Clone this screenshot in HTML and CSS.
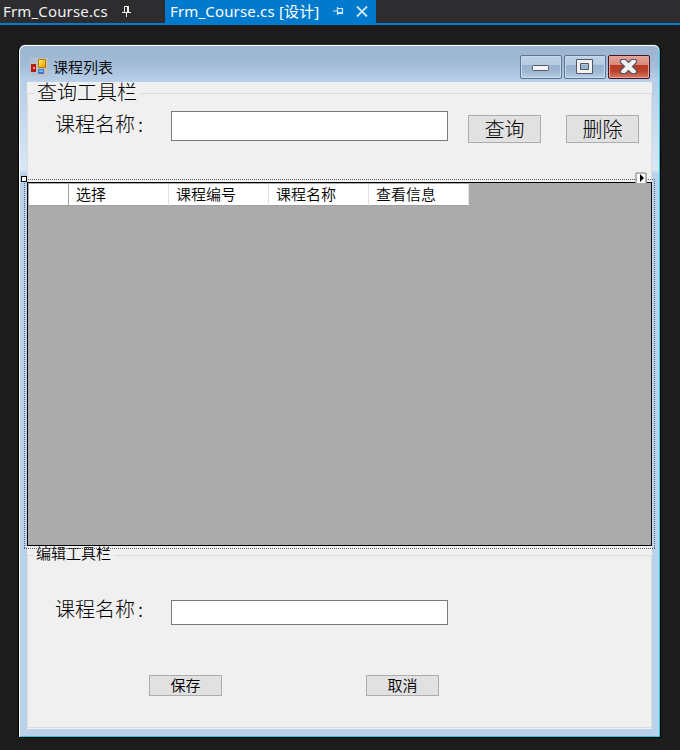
FILE: index.html
```html
<!DOCTYPE html>
<html lang="zh-CN">
<head>
  <meta charset="UTF-8" />
  <title>Frm_Course.cs [设计]</title>
  <link rel="stylesheet" href="styles.css">
</head>
<body>
  <!-- Editor tabs -->
  <div class="tabs">
    <div class="tab">
      <span class="tab-name">Frm_Course.cs</span>
      <svg class="pin" width="9" height="11" viewBox="0 0 9 11"><path d="M2.5 6V.5h4V6M0 6.5h9M4.5 7v4" fill="none" stroke="#f1f1f1"/><path d="M5 0h2v6H5z" fill="#f1f1f1"/></svg>
    </div>
    <div class="tab active">
      <span class="tab-name tab-name-design">Frm_Course.cs [设计]</span>
      <svg class="pin-side" width="11" height="9" viewBox="0 0 11 9"><path d="M4.500 1.500h5v5h-5M4.500 0v8M0 4h4" fill="none" stroke="#d0e6f5" stroke-width="1.200"/><path d="M5 5h5v2H5z" fill="#d0e6f5"/></svg>
      <svg class="tab-close" width="12" height="11" viewBox="0 0 12 11"><path d="M1 .5l10 10M11 .5l-10 10" fill="none" stroke="#d0e6f5" stroke-width="1.800"/></svg>
    </div>
  </div>

  <!-- Form in the designer -->
  <div class="window">
    <div class="titlebar">
      <svg class="app-icon" width="18" height="18" viewBox="0 0 18 18">
        <defs>
          <linearGradient id="gold" x2="1" y2="1"><stop offset="0" stop-color="#fff0a0"/><stop offset=".5" stop-color="#f8c820"/><stop offset="1" stop-color="#d89800"/></linearGradient>
        </defs>
        <path d="M0 0h18v18H0z" fill="#bfc1c2"/>
        <path d="M1 1h5v4H1zM1 13h5v4H1z" fill="#a9bfd8"/>
        <path d="M1 6h5v8H1z" fill="#b81c10"/><path d="M3 9h2v2H3z" fill="#ff9a80"/>
        <path d="M8.500 1.500h7v8h-7z" fill="url(#gold)" stroke="#b07800"/>
        <path d="M8 11h6v5H8z" fill="#3a78d8"/><path d="M9 12h4v2H9z" fill="#80b0f8"/>
      </svg>
      <span class="caption">课程列表</span>
      <div class="sysbuttons">
        <div class="sysbtn"><svg width="40" height="22" viewBox="0 0 40 22"><rect x="11.500" y="9.500" width="16" height="5" rx="1" fill="#f4f4f4" stroke="#535666"/></svg></div>
        <div class="sysbtn"><svg width="40" height="22" viewBox="0 0 40 22"><path fill-rule="evenodd" d="M11.500 3.500h16v14h-16zM15.500 7.500v6h8v-6z" fill="#f2f2f2" stroke="#535666"/></svg></div>
        <div class="sysbtn close"><svg width="40" height="22" viewBox="0 0 40 22"><path d="M12.500 3.500h4l3 3 3-3h4l1 1v2l-4 4 4 4v2l-1 1h-4l-3-3-3 3h-4l-1-1v-2l4-4-4-4v-2z" fill="#f2f2f2" stroke="#535666" stroke-width="1.200"/></svg></div>
      </div>
    </div>

    <div class="client">
      <fieldset class="group query">
        <legend>查询工具栏</legend>
        <div class="row">
          <label class="label" for="queryName">课程名称<span class="colon">:</span></label>
          <input class="textbox tall" id="queryName" type="text">
          <button class="btn big">查询</button>
          <button class="btn big">删除</button>
        </div>
      </fieldset>

      <div class="gridview">
        <div class="columns">
          <div class="col rowhead"></div>
          <div class="col">选择</div>
          <div class="col">课程编号</div>
          <div class="col">课程名称</div>
          <div class="col">查看信息</div>
        </div>
        <!-- designer selection marks -->
        <div class="selection"></div>
        <div class="handle"></div>
        <svg class="smart-tag" width="12" height="11" viewBox="0 0 12 11"><path d="M1 11V1.500L2 1h8l1 .5V11" fill="#fff" stroke="#a3a39b" stroke-width="1.600"/><path d="M5 2v8l4-4z"/></svg>
      </div>

      <fieldset class="group edit">
        <legend>编辑工具栏</legend>
        <div class="row">
          <label class="label" for="editName">课程名称<span class="colon">:</span></label>
          <input class="textbox" id="editName" type="text">
        </div>
        <div class="actions">
          <button class="btn">保存</button>
          <button class="btn">取消</button>
        </div>
      </fieldset>
    </div>
  </div>
</body>
</html>
```
FILE: styles.css
```css
*, *::before, *::after { box-sizing: border-box; }

body {
  margin: 0;
  height: 750px;
  overflow: hidden;
  background: #1c1c1c;
  color: #000;
  font: 350 15px "Noto Sans CJK SC", sans-serif;
}

svg { display: block; flex: none; }

/* Editor tabs */
.tabs {
  display: flex;
  height: 25px;
  background: #2d2d30;
  border-bottom: 2px solid #007acc;
}
.tab {
  display: flex;
  width: 165px;
  padding-left: 3px;
  color: #f1f1f1;
  font: 15px/23px "Noto Sans", "Noto Sans CJK SC", sans-serif;
  letter-spacing: 0.16px;
  white-space: nowrap;
}
.tab.active {
  width: 211px;
  padding-left: 5px;
  background: #007acc;
  color: #fff;
}
.tab-name { width: 105px; }
.tab-name-design { width: 149px; }
.pin { margin: 6px 0 0 14px; }
.pin-side { margin: 7px 0 0 14px; }
.tab-close { margin: 6px 0 0 12px; }

/* Form frame */
.window {
  width: 643px;
  height: 694px;
  margin: 19px 0 0 18px;
  padding: 0 7px 7px;
  border: 1px solid #000;
  border-top-color: #303030;
  border-radius: 7px 7px 0 0;
  background: linear-gradient(#b7cee8 37px, #d9e7f6 125px, #b9d1ea 128px);
  box-shadow: inset 1px 1px #fff, inset -1px -1px #28c8e0;
}
.titlebar {
  display: flex;
  height: 37px;
  margin: 0 -6px;
  padding: 0 9px 0 10px;
  border-top: 1px solid #fff;
  border-radius: 6px 6px 0 0;
  background: linear-gradient(#99b4d1, #a2bbd6 50%, #b9d1ea);
}
.app-icon { margin-top: 12px; }
.caption {
  margin: 11px auto 0 5px;
  line-height: 20px;
}
.sysbuttons { display: flex; gap: 2px; margin-top: 9px; }
.sysbtn {
  width: 42px;
  height: 24px;
  border: 1px solid #5f7390;
  border-radius: 2px;
  background: linear-gradient(#bfd2e6, #b4cae1 42%, #98b1cd 43%, #9db7d2 70%, #b9d1e8);
  box-shadow: inset 0 0 0 1px #c8dbee;
}
.sysbtn.close {
  border-color: #431422;
  background: linear-gradient(#e4a39a, #d98678 42%, #b83a24 43%, #bc432d 70%, #d77b68);
  box-shadow: inset 0 0 0 1px #e3a79f;
}

/* Client area */
.client {
  display: flex;
  flex-direction: column;
  width: 625px;
  height: 647px;
  margin-left: 1px;
  background: #f0f0f0;
}
.group {
  min-width: 0;
  margin: 0;
  padding: 0;
  border: 1px solid #dcdcdc;
}
.group legend {
  margin-left: 6px;
  padding: 0 3px;
}
.query { height: 100px; border-bottom: none; }
.query legend {
  font-size: 20px;
  font-weight: 300;
  line-height: 20px;
  padding-bottom: 3px;
}
.edit { height: 182px; }
.edit legend {
  margin-left: 5px;
  line-height: 14px;
  padding-bottom: 5px;
}
.row {
  display: flex;
  align-items: flex-start;
  padding-left: 27px;
}
.query .row { padding-top: 6px; }
.edit .row { padding-top: 35px; }
.label {
  width: 116px;
  font-size: 20px;
  font-weight: 300;
  line-height: 26px;
}
.edit .label { margin-top: -4px; }
.colon { margin-left: 3px; }
.textbox {
  width: 277px;
  height: 25px;
  padding: 0 4px;
  border: 1px solid #7a7a7a;
  background: #fff;
  font: inherit;
}
.textbox.tall { height: 30px; }
.btn {
  width: 73px;
  height: 21px;
  padding: 0 0 2px;
  border: 1px solid #adadad;
  background: #e1e1e1;
  color: #000;
  font: 350 15px/17px "Noto Sans CJK SC", sans-serif;
}
.btn.big {
  height: 28px;
  margin: 4px 0 0 20px;
  padding: 0;
  font-size: 20px;
  font-weight: 300;
  line-height: 26px;
}
.btn.big + .btn.big { margin-left: 25px; }
.actions {
  display: flex;
  gap: 144px;
  padding: 50px 0 0 121px;
}

/* Course grid */
.gridview {
  position: relative;
  height: 364px;
  padding: 1px;
  border: 1px solid #000;
  background: #ababab;
}
.columns { display: flex; }
.col {
  width: 100px;
  height: 22px;
  padding-left: 7px;
  border-right: 1px solid #e0e0e0;
  border-bottom: 1px solid #a0a0a0;
  background: #fff;
  line-height: 20px;
}
.col.rowhead { width: 40px; border-right-color: #a0a0a0; }
.selection {
  position: absolute;
  inset: -4px -4px -4px -4px;
  --h: repeating-linear-gradient(90deg, #606060 0 1px, transparent 1px 2px);
  --v: repeating-linear-gradient(#606060 0 1px, transparent 1px 2px);
  background:
    var(--h) top / 100% 1px no-repeat,
    var(--h) bottom / 100% 1px no-repeat,
    var(--v) left / 1px 100% no-repeat,
    var(--v) right / 1px 100% no-repeat;
  z-index: 1;
}
.handle {
  position: absolute;
  left: -7px;
  top: -7px;
  width: 6px;
  height: 6px;
  border: 1px solid #000;
  background: #fff;
  z-index: 2;
}
.smart-tag {
  position: absolute;
  left: 607px;
  top: -11px;
  z-index: 2;
}
```
